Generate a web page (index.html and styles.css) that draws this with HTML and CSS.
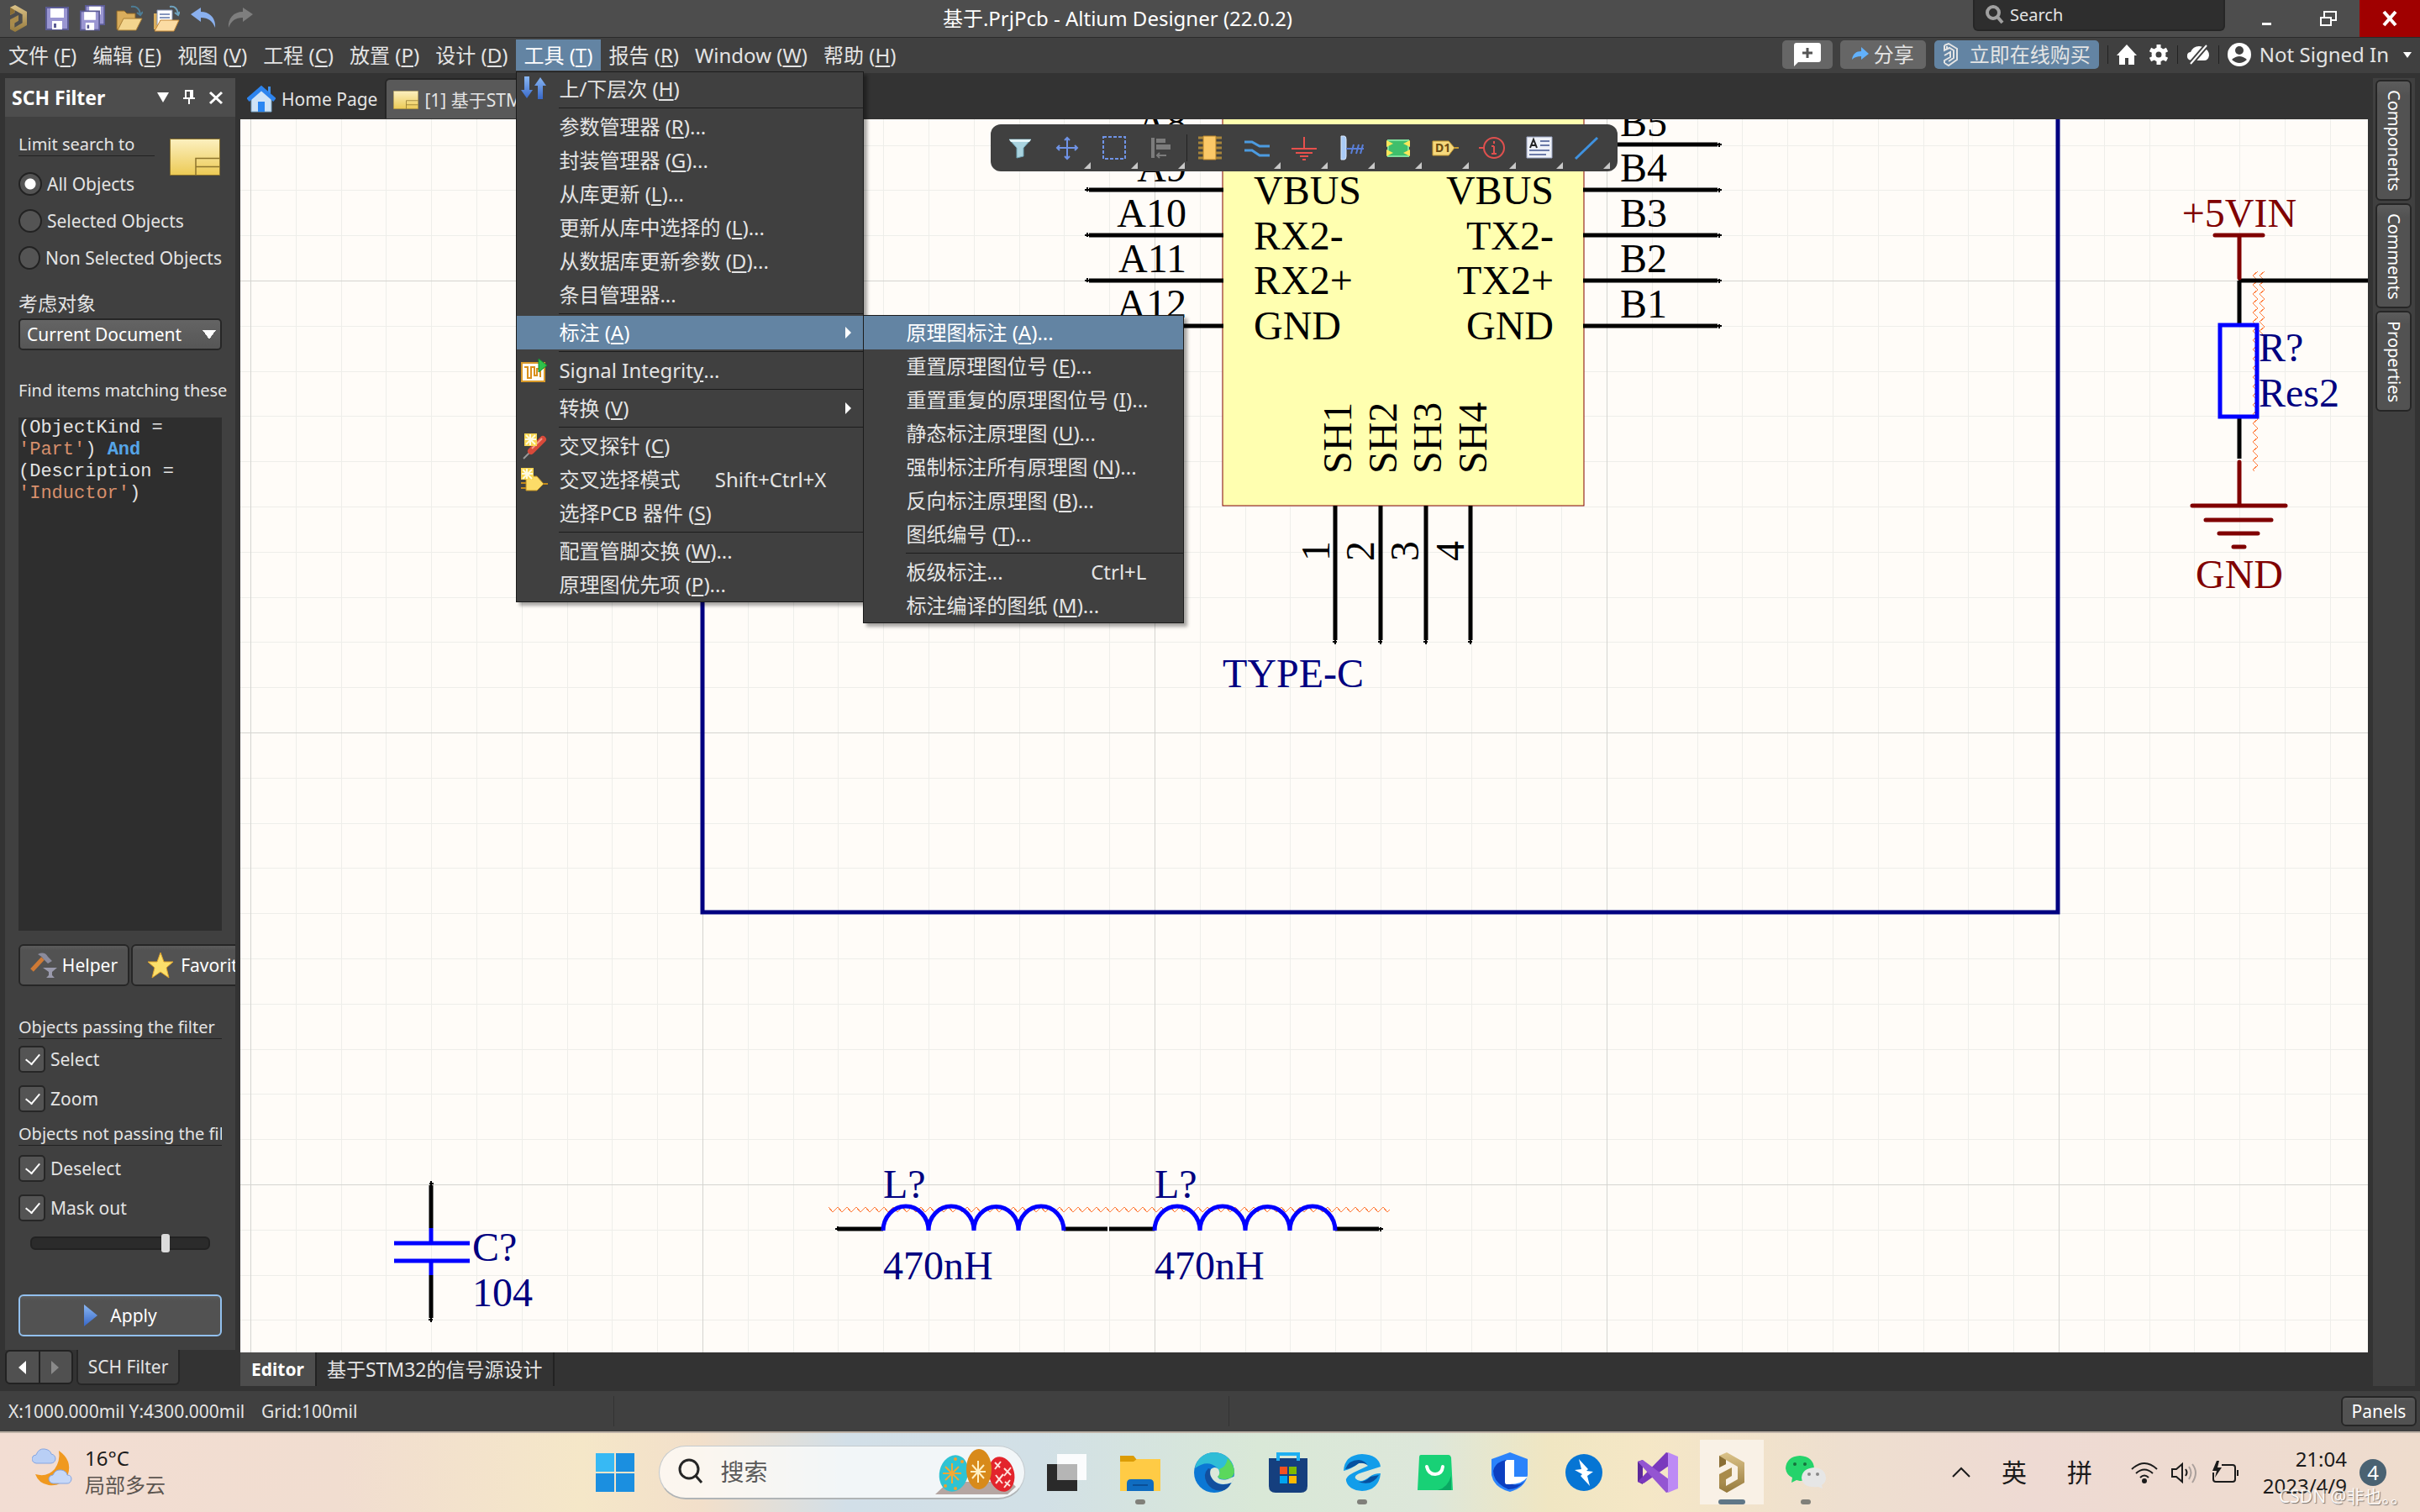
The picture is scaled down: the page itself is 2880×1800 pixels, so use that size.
FILE: index.html
```html
<!DOCTYPE html>
<html lang="zh-CN">
<head>
	<meta charset="utf-8">
	<title>基于.PrjPcb - Altium Designer (22.0.2)</title>
	<link rel="stylesheet" href="styles.css">
</head>
<body>
	<!-- shared shapes -->
	<svg class="defs" width="0" height="0" aria-hidden="true">
		<defs>
			<linearGradient id="gold" x1="0" y1="0" x2="0" y2="1"><stop offset="0" stop-color="#dcc389"/><stop offset="1" stop-color="#95793c"/></linearGradient>
			<linearGradient id="yellow" x1="0" y1="0" x2="0" y2="1"><stop offset="0" stop-color="#fcf0c0"/><stop offset="1" stop-color="#ecca55"/></linearGradient>
			<linearGradient id="blue" x1="0" y1="0" x2="0" y2="1"><stop offset="0" stop-color="#8ab8f4"/><stop offset="1" stop-color="#3767c8"/></linearGradient>
			<symbol id="altium" viewBox="0 0 48 48">
				<path fill="url(#gold)" d="M9 4L18 0L39 12V36L18 48L9 43V35L17 31V40L31 32V17L17 9V14L9 18Z"/>
				<path fill="#a98b4b" d="M9 26L24 18V28L9 37Z"/>
				<path fill="#8a6e35" d="M9 4L17 9V14L9 18Z"/>
			</symbol>
			<symbol id="sheet" viewBox="0 0 60 44" preserveAspectRatio="none">
				<path fill="url(#yellow)" stroke="#8d742c" d="M.5 .5H59.5V43.5H.5Z"/>
				<path fill="none" stroke="#8d742c" stroke-width="1.5" d="M31 43V23.500H59M31 33.500H59"/>
			</symbol>
			<symbol id="floppy" viewBox="0 0 28 28">
				<path fill="#9a96d2" stroke="#5b5b94" stroke-width="2" d="M1 1H27V27H1Z"/>
				<path fill="#fff" d="M6 2H22V13H6ZM8 17H20V27H8Z"/>
				<path fill="#5b5b94" d="M10 20H13V25H10Z"/>
			</symbol>
		</defs>
	</svg>

	<header class="titlebar">
		<div class="quick">
			<svg class="logo" width="32" height="32"><use href="#altium"/></svg>
			<button aria-label="Save"><svg width="28" height="28"><use href="#floppy"/></svg></button>
			<button aria-label="Save all"><svg width="32" height="32" viewBox="0 0 32 32"><use href="#floppy" x="7" y="0" width="24" height="24"/><use href="#floppy" x="1" y="6" width="24" height="25"/></svg></button>
			<button aria-label="Open"><svg width="32" height="32" viewBox="0 0 32 32"><path fill="#d9ad5c" stroke="#8a6526" d="M1 7H10L13 10H23V29H1Z"/><path fill="#f3d58e" stroke="#a97e35" d="M9 16H31L24 30H2Z"/><path fill="none" stroke="#4d7d96" stroke-width="2" d="M18 2C24 1 28 4 29 11M25 9L29 12L32 8"/></svg></button>
			<button aria-label="Open project"><svg width="32" height="32" viewBox="0 0 32 32"><path fill="#d9ad5c" d="M1 10H6V29H1Z"/><path fill="#fff" stroke="#8190b0" d="M5 6H23V24H5Z"/><path stroke="#8596bd" stroke-width="2" d="M8 11H20M8 15H20M8 19H20"/><path fill="#fbdca4" stroke="#c78a36" d="M9 18H31L25 31H2Z"/><path fill="none" stroke="#6fa3bf" stroke-width="2" d="M20 2C26 1 29 4 30 11M26 9L30 12L32 8"/></svg></button>
			<button aria-label="Undo"><svg width="32" height="32" viewBox="0 0 32 32"><path fill="#8ab0ee" d="M1 11L13 3V8C24 8 31 16 30 27C27 19 22 15 13 15V20Z"/></svg></button>
			<button aria-label="Redo"><svg width="32" height="32" viewBox="0 0 32 32"><path fill="#7e7e7e" d="M31 11L19 3V8C8 8 1 16 2 27C5 19 10 15 19 15V20Z"/></svg></button>
		</div>
		<h1>基于.PrjPcb - Altium Designer (22.0.2)</h1>
		<label class="search">
			<svg width="24" height="24" viewBox="0 0 24 24" fill="none" stroke="#a0a0a0" stroke-width="4"><circle cx="10" cy="9" r="7"/><path d="M15 14L21 21"/></svg>
			<input type="text" placeholder="Search" aria-label="Search">
		</label>
		<div class="window-buttons">
			<button aria-label="Minimize"><svg width="24" height="24"><path fill="#fff" d="M7 17H18V20H7Z"/></svg></button>
			<button aria-label="Restore"><svg width="24" height="24" fill="none" stroke="#fff" stroke-width="2"><path d="M3 11H15V20H3ZM7 10V4H21V14H16"/></svg></button>
			<button class="close" aria-label="Close"><svg width="24" height="24" stroke="#fff" stroke-width="4"><path d="M5 4L19 20M19 4L5 20"/></svg></button>
		</div>
	</header>

	<nav class="menubar">
		<ul class="menus">
			<li><button>文件 (<u>F</u>)</button></li>
			<li><button>编辑 (<u>E</u>)</button></li>
			<li><button>视图 (<u>V</u>)</button></li>
			<li><button>工程 (<u>C</u>)</button></li>
			<li><button>放置 (<u>P</u>)</button></li>
			<li><button>设计 (<u>D</u>)</button></li>
			<li class="open"><button>工具 (<u>T</u>)</button>
				<ul class="dropdown">
					<li><button><svg width="30" height="30" viewBox="0 0 30 30" fill="url(#blue)"><path d="M4 1H10V17H14L7 27L0 17H4ZM20 28H26V12H30L23 2L16 12H20Z"/></svg>上/下层次 (<u>H</u>)</button></li>
					<li class="line"><button>参数管理器 (<u>R</u>)...</button></li>
					<li><button>封装管理器 (<u>G</u>)...</button></li>
					<li><button>从库更新 (<u>L</u>)...</button></li>
					<li><button>更新从库中选择的 (<u>L</u>)...</button></li>
					<li><button>从数据库更新参数 (<u>D</u>)...</button></li>
					<li><button>条目管理器...</button></li>
					<li class="line open has-sub"><button>标注 (<u>A</u>)</button>
						<ul class="dropdown submenu">
							<li class="open"><button>原理图标注 (<u>A</u>)...</button></li>
							<li><button>重置原理图位号 (<u>E</u>)...</button></li>
							<li><button>重置重复的原理图位号 (<u>I</u>)...</button></li>
							<li><button>静态标注原理图 (<u>U</u>)...</button></li>
							<li><button>强制标注所有原理图 (<u>N</u>)...</button></li>
							<li><button>反向标注原理图 (<u>B</u>)...</button></li>
							<li><button>图纸编号 (<u>T</u>)...</button></li>
							<li class="line"><button>板级标注...<kbd>Ctrl+L</kbd></button></li>
							<li><button>标注编译的图纸 (<u>M</u>)...</button></li>
						</ul>
					</li>
					<li class="line"><button><svg width="32" height="32" viewBox="0 0 32 32"><path fill="#fffdf4" stroke="#d99a2b" stroke-width="2" d="M1 7H28V29H1Z"/><path fill="none" stroke="#d98f1c" stroke-width="2" d="M4 12H8V25H12V12H16V22H19V14H23V24"/><path fill="#2fc24b" stroke="#168a30" d="M21 2L31 10L21 18Z"/></svg>Signal Integrit<u>y</u>...</button></li>
					<li class="line has-sub"><button>转换 (<u>V</u>)</button></li>
					<li class="line"><button><svg width="32" height="32" viewBox="0 0 32 32"><path stroke="#999" stroke-width="2" d="M3 31L12 22"/><path stroke="#d94a3a" stroke-width="8" stroke-linecap="round" d="M12 22L26 8"/><path stroke="#f59b8b" stroke-width="2" d="M13 19L25 7"/><path fill="#f8d652" d="M4 1H19V16H4Z"/><path stroke="#fffbe0" stroke-width="2" d="M11 2V15M5 8H18M6 3L17 14M17 3L6 14"/></svg>交叉探针 (<u>C</u>)</button></li>
					<li><button><svg width="32" height="32" viewBox="0 0 32 32"><path stroke="#c48a1a" stroke-width="2" d="M0 20H8M0 26H8M25 21H32"/><path fill="#fcdc68" stroke="#b98a1e" d="M6 12H19L27 21L19 29H6Z"/><path fill="#f8d652" d="M0 2H15V16H0Z"/><path stroke="#fffbe0" stroke-width="2" d="M7 3V15M1 9H14M2 4L13 15M13 4L2 15"/></svg>交叉选择模式<kbd>Shift+Ctrl+X</kbd></button></li>
					<li><button>选择PCB 器件 (<u>S</u>)</button></li>
					<li class="line"><button>配置管脚交换 (<u>W</u>)...</button></li>
					<li><button>原理图优先项 (<u>P</u>)...</button></li>
				</ul>
			</li>
			<li><button>报告 (<u>R</u>)</button></li>
			<li><button>Window (<u>W</u>)</button></li>
			<li><button>帮助 (<u>H</u>)</button></li>
		</ul>
		<div class="account">
			<button class="pill note" aria-label="Add comment"><svg width="32" height="28" viewBox="0 0 32 28"><path fill="#fff" d="M3 0H29Q32 0 32 3V20Q32 23 29 23H5L0 28V3Q0 0 3 0Z"/><path stroke="#555" stroke-width="3" d="M16 6V18M10 12H22"/></svg></button>
			<button class="pill share"><svg width="20" height="20" viewBox="0 0 20 20"><path fill="#62b1fb" d="M0 16C1 9 5 6 11 6V1L20 9L11 16V12C6 12 3 13 0 16Z"/></svg>分享</button>
			<button class="pill buy"><svg width="20" height="28" viewBox="0 0 20 28" fill="none" stroke="#e4e4e4" stroke-width="2"><path d="M2 3L7 1L17 7V20L7 27L2 24M2 3V9L8 6L13 9V18L7 22M2 15L9 11V17L2 21V24M5 4V8"/></svg>立即在线购买</button>
			<i class="bar"></i>
			<button aria-label="Home"><svg width="24" height="24" viewBox="0 0 24 24"><path fill="#fff" d="M12 0L24 13H21V24H14V16H10V24H3V13H0Z"/></svg></button>
			<button aria-label="Settings"><svg width="24" height="24" viewBox="0 0 24 24"><circle cx="12" cy="12" r="6" fill="none" stroke="#fff" stroke-width="5"/><path stroke="#fff" stroke-width="5" d="M12 0V5M12 19V24M2 6L6 8M18 16L22 18M2 18L6 16M18 8L22 6"/></svg></button>
			<i class="bar"></i>
			<button aria-label="Offline"><svg width="28" height="24" viewBox="0 0 28 24"><path fill="#fff" d="M6 19Q0 18 1 12Q2 9 5 9Q8 2 15 2Q19 2 20 4Q27 6 27 13Q26 19 21 19Z"/><path stroke="#404040" stroke-width="6" d="M5 23L24 1"/><path stroke="#fff" stroke-width="2" d="M5 23L24 1"/></svg></button>
			<i class="bar"></i>
			<button class="user"><svg width="28" height="28" viewBox="0 0 28 28"><circle cx="14" cy="14" r="14" fill="#fff"/><circle cx="14" cy="9" r="5" fill="#404040"/><path fill="#404040" d="M5 20Q14 12 23 20Q14 28 5 20Z"/></svg>Not Signed In <span class="caret"></span></button>
		</div>
	</nav>

	<div class="workspace">
		<aside class="left">
			<section class="panel">
				<header>
					<h2>SCH Filter</h2>
					<button aria-label="Menu"><svg width="16" height="24"><path fill="#fff" d="M1 6H15L8 18Z"/></svg></button>
					<button aria-label="Pin"><svg width="14" height="24" fill="none" stroke="#fff" stroke-width="2"><path d="M3 12V4H11V12M0 13H14M9 4V12M7 13V20"/></svg></button>
					<button aria-label="Close"><svg width="18" height="24" stroke="#fff" stroke-width="3"><path d="M2 6L16 19M16 6L2 19"/></svg></button>
				</header>
				<div class="panel-body">
					<div class="limit">
						<p class="legend">Limit search to</p>
						<svg width="60" height="44"><use href="#sheet"/></svg>
					</div>
					<label class="radio"><input type="radio" name="limit" checked>All Objects</label>
					<label class="radio"><input type="radio" name="limit">Selected Objects</label>
					<label class="radio"><input type="radio" name="limit">Non Selected Objects</label>
					<label class="consider" for="scope">考虑对象</label>
					<select id="scope"><option>Current Document</option><option>Open Documents</option></select>
					<p class="find" id="query-label">Find items matching these</p>
					<div class="query" contenteditable="true" spellcheck="false" role="textbox" aria-labelledby="query-label">(ObjectKind = <em>'Part'</em>) <b>And</b> (Description = <em>'Inductor'</em>)</div>
					<div class="helpers">
						<button><svg width="32" height="34" viewBox="0 0 32 34"><path stroke="#cf7a35" stroke-width="5" d="M2 23L15 9"/><path fill="#8b8b9c" d="M9 4Q17 0 21 7L26 12L21 15L16 10Q13 6 9 4Z"/><path fill="#9a9aac" d="M15 20H32L26 25V29L29 32H19L22 29V25Z"/></svg>Helper</button>
						<button class="fav"><svg width="32" height="32" viewBox="0 0 32 32"><path fill="#fbdf6b" stroke="#e0a52c" d="M16 1L20 12L31 12L23 19L26 31L16 24L6 31L9 19L1 12L12 12Z"/></svg>Favorites</button>
					</div>
					<p class="legend passing">Objects passing the filter</p>
					<label class="check"><input type="checkbox" checked>Select</label>
					<label class="check"><input type="checkbox" checked>Zoom</label>
					<p class="legend not-passing">Objects not passing the filter</p>
					<label class="check"><input type="checkbox" checked>Deselect</label>
					<label class="check"><input type="checkbox" checked>Mask out</label>
					<input class="level" type="range" min="0" max="100" value="77" aria-label="Mask level">
					<button class="apply"><svg width="18" height="28"><path fill="url(#blue)" d="M1 1L17 14L1 27Z"/></svg>Apply</button>
				</div>
			</section>
			<div class="panel-tabs">
				<div class="arrows"><button aria-label="Previous"><svg width="10" height="16"><path fill="#fff" d="M9 0V16L0 8Z"/></svg></button><button aria-label="Next"><svg width="10" height="16"><path fill="#8a8a8a" d="M0 0V16L9 8Z"/></svg></button></div>
				<button class="tab">SCH Filter</button>
			</div>
		</aside>

		<main class="center">
			<div class="doc-tabs">
				<a href="#home" class="doc"><svg width="34" height="34" viewBox="0 0 34 34"><path fill="#cfe3f6" stroke="#7aa6c8" d="M5 15L17 4L29 15V32H5Z"/><path fill="#3f8fe8" d="M25 2H28V10H25Z"/><path fill="none" stroke="#2d84ee" stroke-width="5" d="M1 18L17 4L33 18"/><path fill="#2a86f2" d="M13 20H21V32H13Z"/></svg>Home Page</a>
				<a href="#sheet1" class="doc active"><svg width="30" height="22"><use href="#sheet"/></svg>[1] 基于STM32的信号源设计.SchDoc</a>
			</div>

			<div class="sheet">
				<svg class="schematic" width="100%" height="100%">
					<defs>
						<pattern id="grid" x="298" y="334" width="538" height="538" patternUnits="userSpaceOnUse">
							<path class="minor" d="M54 0V538M108 0V538M161 0V538M215 0V538M269 0V538M323 0V538M377 0V538M430 0V538M484 0V538M0 54H538M0 108H538M0 161H538M0 215H538M0 269H538M0 323H538M0 377H538M0 430H538M0 484H538"/>
							<path class="major" d="M0 0V538M0 0H538"/>
						</pattern>
						<pattern id="wave-h" x="986" y="1436" width="11" height="8" patternUnits="userSpaceOnUse"><path class="wave" d="M0 1L5 7L11 1"/></pattern>
						<pattern id="wave-v" x="2680" y="323" width="8" height="11" patternUnits="userSpaceOnUse"><path class="wave" d="M7 0L1 5L7 11"/></pattern>
						<g id="coil">
							<path stroke="#000" d="M-54 0H0M215 0H267"/>
							<path stroke="#00f" d="M0 2A26 28 0 0 1 54 2A26 28 0 0 1 108 2A26 28 0 0 1 161 2A26 28 0 0 1 215 2"/>
						</g>
						<!-- free end of a pin -->
						<marker id="tip" viewBox="0 0 6 7" refX="3" refY="3" markerWidth="6" markerHeight="7" markerUnits="userSpaceOnUse" orient="auto-start-reverse"><path stroke="#000" stroke-width="2" d="M0 3H6M3 1V6"/></marker>
					</defs>
					<!-- drawing uses window coordinates, the sheet starts at 286,142 -->
					<g transform="translate(-286 -142)">
						<rect x="286" y="142" width="100%" height="100%" fill="url(#grid)"/>
						<path class="wire navy" d="M836 142V1086H2449V142"/>

						<rect class="part" x="1455" y="130" width="430" height="472"/>
						<path class="wire" d="M1296 172H1456M1296 226H1456M1296 280H1456M1296 334H1456M1296 388H1456M1884 172H2044M1884 226H2044M1884 280H2044M1884 334H2044M1884 388H2044M1589 602V762M1643 602V762M1697 602V762M1750 602V762"/>
						<g class="tips">
							<path d="M1294 226H1300"/><path d="M1294 280H1300"/><path d="M1294 334H1300"/>
							<path d="M2046 172H2040"/><path d="M2046 226H2040"/><path d="M2046 280H2040"/><path d="M2046 334H2040"/><path d="M2046 388H2040"/>
							<path d="M1589 764V758"/><path d="M1643 764V758"/><path d="M1697 764V758"/><path d="M1750 764V758"/>
							<path d="M513 1409V1415"/><path d="M513 1571V1565"/>
							<path d="M997 1463H1003"/><path d="M1643 1463H1637"/>
						</g>
						<g text-anchor="end">
							<text x="1412" y="162">A8</text>
							<text x="1412" y="216">A9</text>
							<text x="1412" y="270">A10</text>
							<text x="1412" y="324">A11</text>
							<text x="1412" y="378">A12</text>
							<text x="1849" y="243">VBUS</text>
							<text x="1849" y="297">TX2-</text>
							<text x="1849" y="350">TX2+</text>
							<text x="1849" y="404">GND</text>
						</g>
						<g>
							<text x="1492" y="243">VBUS</text>
							<text x="1492" y="297">RX2-</text>
							<text x="1492" y="350">RX2+</text>
							<text x="1492" y="404">GND</text>
							<text x="1928" y="162">B5</text>
							<text x="1928" y="216">B4</text>
							<text x="1928" y="270">B3</text>
							<text x="1928" y="324">B2</text>
							<text x="1928" y="378">B1</text>
						</g>
						<g>
							<text transform="translate(1608 564) rotate(-90)">SH1</text>
							<text transform="translate(1662 564) rotate(-90)">SH2</text>
							<text transform="translate(1715 564) rotate(-90)">SH3</text>
							<text transform="translate(1769 564) rotate(-90)">SH4</text>
							<text transform="translate(1582 668) rotate(-90)">1</text>
							<text transform="translate(1635 668) rotate(-90)">2</text>
							<text transform="translate(1688 668) rotate(-90)">3</text>
							<text transform="translate(1742 668) rotate(-90)">4</text>
						</g>
						<text class="name" x="1455" y="818">TYPE-C</text>

						<!-- +5VIN divider -->
						<rect x="2680" y="323" width="8" height="238" fill="url(#wave-v)"/>
						<rect x="2688" y="323" width="8" height="76" fill="url(#wave-v)"/>
						<path class="wire" d="M2664 334H2900M2665 334V386M2665 498V546"/>
						<path class="wire maroon" d="M2636 280H2693M2665 280V331M2665 550V602M2609 602H2720M2625 619H2703M2641 635H2687M2658 651H2671"/>
						<rect class="outline" x="2642" y="387" width="44" height="109"/>
						<text class="power" x="2665" y="270" text-anchor="middle">+5VIN</text>
						<text class="power" x="2665" y="700" text-anchor="middle">GND</text>
						<text class="name" x="2688" y="430">R?</text>
						<text class="name" x="2688" y="484">Res2</text>

						<!-- capacitor -->
						<path class="wire" d="M513 1411V1462M513 1518V1569"/>
						<path class="wire blue" d="M513 1462V1480M469 1480H559M469 1501H559M513 1501V1518"/>
						<text class="name" x="562" y="1501">C?</text>
						<text class="name" x="562" y="1555">104</text>

						<!-- inductors -->
						<rect x="986" y="1436" width="668" height="8" fill="url(#wave-h)"/>
						<g class="wire"><use href="#coil" x="1051" y="1463"/><use href="#coil" x="1374" y="1463"/></g>
						<text class="name" x="1051" y="1426">L?</text>
						<text class="name" x="1051" y="1523">470nH</text>
						<text class="name" x="1374" y="1426">L?</text>
						<text class="name" x="1374" y="1523">470nH</text>
					</g>
				</svg>

				<div class="active-bar">
					<button aria-label="Filter"><svg width="32" height="36" viewBox="0 0 32 36"><path fill="#a9d3df" stroke="#6fa4b5" d="M3 8H29L20 18V28L12 30V18Z"/><path fill="#e4f5fa" d="M3 8H29L27 11H5Z"/></svg></button>
					<button aria-label="Move"><svg width="32" height="36" viewBox="0 0 32 36" stroke="#6f93e6" stroke-width="2" fill="none"><path d="M16 6V31M4 18H28M13 9L16 6L19 9M13 28L16 31L19 28M7 15L4 18L7 21M25 15L28 18L25 21"/></svg></button>
					<button aria-label="Select"><svg width="32" height="36" viewBox="0 0 32 36"><path fill="none" stroke="#6f93e6" stroke-width="2" stroke-dasharray="4 2" d="M3 5H29V31H3Z"/></svg></button>
					<button aria-label="Align"><svg width="32" height="36" viewBox="0 0 32 36"><path fill="#7c7c7c" d="M4 6H8V30H4ZM10 7H21V12H10ZM10 14H27V20H10Z"/><path stroke="#7c7c7c" stroke-width="2" d="M11 27H22M14 24L11 27L14 30"/></svg></button>
					<button class="split" aria-label="Place part"><svg width="32" height="36" viewBox="0 0 32 36"><path stroke="#a8853a" stroke-width="3" d="M2 6H30M2 12H30M2 18H30M2 24H30M2 30H30"/><path fill="#fbc867" stroke="#b8842b" d="M8 4H23V32H8Z"/></svg></button>
					<button aria-label="Wire"><svg width="32" height="36" viewBox="0 0 32 36" fill="none" stroke="#4c9be0" stroke-width="3"><path d="M1 11H10L19 16H31M1 21H10L19 27H31"/></svg></button>
					<button aria-label="Power port"><svg width="32" height="36" viewBox="0 0 32 36" stroke="#e8504c" stroke-width="2"><path d="M16 5V19M1 19H31M6 24H26M11 28H21M14 32H18"/></svg></button>
					<button aria-label="Bus"><svg width="32" height="36" viewBox="0 0 32 36"><path fill="#a9cbf6" stroke="#dceafc" d="M4 4H8Q10 4 10 8V28Q10 32 8 32H4Z"/><path stroke="#5a7fd8" stroke-width="2" d="M10 19H31M16 25L19 14M22 25L25 14M27 25L30 14"/></svg></button>
					<button aria-label="Sheet symbol"><svg width="32" height="36" viewBox="0 0 32 36"><path fill="#3fbf6c" stroke="#7de09c" stroke-width="2" d="M4 9H28V28H4Z"/><path fill="#fbe75a" d="M2 9L10 13L2 17ZM30 9L22 13L30 17ZM2 20L10 24L2 28ZM30 20L22 24L30 28Z"/></svg></button>
					<button aria-label="Port"><svg width="32" height="36" viewBox="0 0 32 36"><path fill="#f5d87c" stroke="#c59a32" d="M1 10H20L27 18L20 27H1Z"/><path stroke="#c59a32" stroke-width="2" d="M27 18H32"/><text class="port-text" x="4" y="23">D1</text></svg></button>
					<button aria-label="Directive"><svg width="32" height="36" viewBox="0 0 32 36" fill="none" stroke="#e0504e" stroke-width="2"><circle cx="18" cy="18" r="12"/><path d="M0 18H6M18 16V25M15 25H21M18 10V13M15 16H18"/></svg></button>
					<button aria-label="Text"><svg width="32" height="36" viewBox="0 0 32 36"><path fill="#eef1f8" stroke="#9aa5c4" d="M1 5H31V30H1Z"/><path stroke="#6b7aa8" stroke-width="2" d="M17 10H28M17 15H28M4 21H28M4 26H24"/><path fill="none" stroke="#222" stroke-width="2" d="M5 18L9 8L13 18M6 15H12"/></svg></button>
					<button aria-label="Line"><svg width="32" height="36" viewBox="0 0 32 36"><path stroke="#3f92e0" stroke-width="3" d="M3 31L29 6"/></svg></button>
				</div>
			</div>

			<div class="editor-tabs">
				<button class="active">Editor</button>
				<button>基于STM32的信号源设计</button>
			</div>
		</main>

		<aside class="right">
			<button>Components</button>
			<button>Comments</button>
			<button>Properties</button>
		</aside>
	</div>

	<footer class="status">
		<span class="coords">X:1000.000mil Y:4300.000mil</span>
		<span class="cell">Grid:100mil</span>
		<span class="cell"></span>
		<button>Panels</button>
	</footer>

	<div class="taskbar">
		<div class="weather">
			<svg width="48" height="48" viewBox="0 0 48 48"><path fill="#f0991f" d="M32 3Q48 14 43 31Q36 46 20 44Q8 42 4 31Q18 35 27 25Q34 15 32 3Z"/><path fill="#b9cff5" stroke="#86a6e2" d="M5 18Q0 17 0 12Q1 8 5 8Q8 0 15 1Q22 2 23 7Q28 8 28 13Q27 18 22 18Z"/><path fill="#c6d8f8" stroke="#86a6e2" d="M25 42Q20 41 20 36Q21 32 25 32Q28 25 35 26Q41 27 42 32Q47 32 47 37Q46 42 42 42Z"/></svg>
			<p>16°C<br><span>局部多云</span></p>
		</div>
		<div class="apps">
			<button aria-label="Start"><svg width="48" height="48"><path fill="#1b8fe0" d="M1 1H23V23H1ZM25 1H47V23H25ZM1 25H23V47H1ZM25 25H47V47H25Z"/><path fill="#37b9f4" d="M1 1H23V23H1Z"/></svg></button>
			<label class="find-box">
				<svg width="32" height="32" viewBox="0 0 32 32" fill="none" stroke="#262626" stroke-width="3"><circle cx="14" cy="13" r="11"/><path d="M22 21L29 29"/></svg>
				<input type="text" placeholder="搜索" aria-label="搜索">
				<svg width="100" height="56" viewBox="0 0 100 56"><path fill="#b5a6a2" d="M2 55L18 40H92L98 46L88 55Z"/><ellipse cx="24" cy="30" rx="17" ry="22" fill="#2fc3d3" transform="rotate(14 24 30)"/><ellipse cx="81" cy="31" rx="15" ry="21" fill="#e3242c" transform="rotate(-14 81 31)"/><ellipse cx="54" cy="25" rx="15" ry="24" fill="#d88a1a"/><g fill="none" stroke-width="2"><path stroke="#f5a833" d="M22 18V42M11 30H33M14 22L30 38M30 22L14 38"/><path stroke="#fff0c4" d="M53 15V41M44 28H62M46 20L60 36M60 20L46 36"/><path stroke="#ffe3dd" d="M73 17L79 23M80 16L73 25M84 24L92 32M92 23L84 33M74 32L82 42M83 31L74 42M85 40L91 45M91 38L84 47"/></g><g fill="#f0a030"><circle cx="26" cy="13" r="2"/><circle cx="34" cy="16" r="2"/><circle cx="14" cy="45" r="2"/><circle cx="26" cy="48" r="2"/></g></svg>
			</label>
			<button aria-label="Task view"><svg width="48" height="48"><path fill="#2a2a2a" d="M1 14H37V46H1Z"/><path fill="#fff" fill-opacity=".9" d="M13 2H48V33H13Z"/><path fill="#b5b5b5" d="M13 14H37V33H13Z"/></svg></button>
			<button class="running" aria-label="Explorer"><svg width="48" height="48"><path fill="#dc9c05" d="M0 4H16L20 9H46V16H0Z"/><path fill="#ffcb45" d="M0 11H16L20 8H48V46H0Z"/><path fill="#0f6cc0" d="M8 46V37Q8 32 13 32H35Q40 32 40 37V46Z"/><path stroke="#0a4f96" stroke-width="2" d="M15 39H33"/></svg></button>
			<button aria-label="Edge"><svg width="48" height="48"><circle cx="24" cy="24" r="24" fill="#0b77d4"/><path fill="#2fbdd6" d="M1 19Q5 1 24 0Q40 1 46 14Q50 26 42 30Q33 34 28 30Q32 24 27 18Q16 8 1 19Z"/><path fill="#5bd85c" d="M40 7Q48 15 48 24Q46 32 37 32Q30 32 28 29Q32 25 30 20Q38 18 40 7Z"/><path fill="#124f9e" d="M17 19Q10 26 15 36Q22 48 36 45Q42 42 44 36Q30 42 23 33Q18 27 20 20Z"/><path fill="#dbe8da" d="M29 20Q32 26 28 29Q30 34 40 32L49 28L45 36Q32 41 24 34Q17 27 20 20Q25 16 29 20Z"/></svg></button>
			<button aria-label="Store"><svg width="48" height="48"><path fill="#153f7e" d="M1 7H47V40Q47 48 39 48H9Q1 48 1 40Z"/><path fill="none" stroke="#1fb0f2" stroke-width="4" d="M12 10V2H36V10"/><path fill="#f25022" d="M14 17H23V26H14Z"/><path fill="#7fba00" d="M25 17H34V26H25Z"/><path fill="#00a4ef" d="M14 28H23V37H14Z"/><path fill="#ffb900" d="M25 28H34V37H25Z"/></svg></button>
			<button class="running" aria-label="Browser"><svg width="48" height="48"><path fill="#129dea" d="M2 22Q3 3 24 2Q44 3 46 17L24 24Q14 27 16 31Q22 38 33 29Q38 25 46 25Q44 45 24 46Q8 45 5 34Q4 29 14 24L31 16Q28 11 20 13Q11 20 2 22Z"/><path fill="#07509f" d="M4 20Q8 9 20 9Q28 10 31 16Q27 12 20 13Q12 19 4 20ZM19 35Q27 36 34 29L44 27Q36 41 19 35Z"/></svg></button>
			<button aria-label="Shop"><svg width="48" height="48"><path fill="#18d176" d="M6 3H39Q41 3 42 6L44 45H2L4 6Q4 3 6 3Z"/><path fill="#0aa763" d="M42 28V45H26Q38 42 42 28Z"/><path fill="none" stroke="#fff" stroke-width="4" stroke-linecap="round" d="M13 17Q15 26 23 26Q31 26 32 17"/></svg></button>
			<button aria-label="Lenovo"><svg width="48" height="48"><path fill="#2b83fb" d="M2 8L24 0L45 8V27Q42 42 24 47Q5 42 2 27Z"/><path fill="#0c3fc0" d="M19 9H27V38Q36 40 42 34Q34 44 22 44Q4 36 4 22Q6 12 19 9Z"/><path fill="#fff" d="M20 9H29V29H45Q38 39 20 38Q18 38 18 35V11Z"/></svg></button>
			<button aria-label="Thunder"><svg width="48" height="48"><circle cx="24" cy="24" r="22" fill="#0675d4"/><path fill="#fff" d="M18 8L29 20L27 22L35 23L28 28L31 40L20 28L22 26L13 21L21 20Z"/></svg></button>
			<button aria-label="Visual Studio"><svg width="48" height="48"><path fill="#5c2899" d="M0 11L6 9V38L0 35Z"/><path fill="#7a39bd" d="M0 35L34 0L37 1V16L7 37Z"/><path fill="#9455d2" d="M0 11L6 9L37 32V47L34 48Z"/><path fill="#bd8af5" d="M36 0L48 5V43L36 48Z"/></svg></button>
			<button class="running current" aria-label="Altium Designer"><svg width="48" height="48"><use href="#altium"/></svg></button>
			<button class="running" aria-label="WeChat"><svg width="48" height="48"><path fill="#25d36b" d="M17 4Q33 5 34 19Q33 34 17 34L13 33L7 36L8 30Q1 27 0 19Q1 5 17 4Z"/><circle cx="11" cy="14" r="2" fill="#16733d"/><circle cx="23" cy="14" r="2" fill="#16733d"/><path fill="#e6e6e6" d="M34 18Q47 19 48 30Q48 36 43 39L44 43L39 41Q20 43 19 30Q20 19 34 18Z"/><circle cx="28" cy="26" r="2" fill="#888"/><circle cx="38" cy="26" r="2" fill="#888"/></svg></button>
		</div>
		<div class="tray">
			<button aria-label="More"><svg width="24" height="24" fill="none" stroke="#1b1b1b" stroke-width="2"><path d="M2 17L12 7L22 17"/></svg></button>
			<button>英</button>
			<button>拼</button>
			<button class="system" aria-label="Network, volume, battery">
				<svg width="32" height="28" fill="none" stroke="#1b1b1b" stroke-width="2"><path d="M1 10Q16 -4 31 10M6 15Q16 6 26 15M11 20Q16 15 21 20"/><circle cx="16" cy="24" r="2" fill="#1b1b1b"/></svg>
				<svg width="32" height="28" fill="none" stroke="#1b1b1b" stroke-width="2"><path d="M1 10H6L13 4V25L6 19H1ZM17 10Q20 14 17 18"/><path stroke="#aaa09c" d="M21 7Q26 14 21 22M25 4Q33 14 25 26"/></svg>
				<svg width="34" height="28" fill="none" stroke="#1b1b1b" stroke-width="2"><path d="M12 5H25Q28 5 28 8V22Q28 25 25 25H5Q2 25 2 22V14M31 11V18"/><path fill="#1b1b1b" stroke="none" d="M6 0L1 12H6L4 20L12 8H7L9 0Z"/></svg>
			</button>
			<p class="clock">21:04<br>2023/4/9</p>
			<span class="badge">4</span>
			<span class="watermark">CSDN @非也。。</span>
		</div>
	</div>
</body>
</html>
```
FILE: styles.css
```css
* { box-sizing: border-box; }
body { margin: 0; min-height: 100vh; display: flex; flex-direction: column; background: #333333; color: #e4e4e4; font-family: "Noto Sans", "Noto Sans CJK SC", sans-serif; font-size: 21px; line-height: 28px; overflow: hidden; }
h1, h2, p, ul { margin: 0; padding: 0; font-weight: normal; }
ul { list-style: none; }
button { display: flex; align-items: center; justify-content: center; margin: 0; padding: 0; border: 0; background: none; color: inherit; font: inherit; white-space: nowrap; }
input, select { margin: 0; font: inherit; color: inherit; }
a { color: inherit; text-decoration: none; }
svg { flex: none; }
.defs { position: absolute; }

/* title bar */
.titlebar { display: flex; align-items: center; height: 45px; background: #4d4d4d; border-bottom: 1px solid #2b2b2b; }
.quick { display: flex; align-items: center; gap: 12px; width: 312px; padding-left: 6px; }
.quick .logo { margin-right: 4px; }
.titlebar h1 { flex: 1; text-align: center; font-size: 24px; color: #ffffff; }
.search { display: flex; align-items: center; align-self: flex-start; gap: 4px; width: 300px; height: 37px; padding-left: 12px; background: #2e2e2e; border: 2px solid #262626; border-top: 0; border-radius: 0 0 6px 6px; }
.search input { width: 200px; border: 0; background: none; outline: none; font-size: 20px; }
.search input::placeholder { color: #e4e4e4; }
.window-buttons { display: flex; height: 44px; padding-left: 12px; }
.window-buttons button { width: 74px; }
.window-buttons .close { width: 72px; background: #a00000; }

/* menu bar */
.menubar { display: flex; justify-content: space-between; height: 42px; padding: 2px 10px 0 1px; background: #404040; font-size: 24px; }
.menus { display: flex; }
.menus > li { position: relative; height: 37px; }
.menus > li > button { height: 37px; padding: 0 10px 0 9px; }
.menus u { text-underline-offset: 3px; text-decoration-thickness: 2px; }
.open > button { background: #6384a3; color: #ffffff; }

.dropdown { position: absolute; z-index: 10; top: 38px; left: 0; width: 414px; background: #404040; border: 1px solid #1c1c1c; box-shadow: 4px 4px 4px rgba(0, 0, 0, 0.35); }
.dropdown > li { position: relative; }
.dropdown > li > button { position: relative; width: 100%; height: 40px; padding: 0 44px 0 50px; justify-content: flex-start; }
.dropdown > li > button > svg { position: absolute; left: 5px; top: 4px; }
.dropdown > .line { padding-top: 5px; }
.dropdown > .line::before { content: ""; position: absolute; left: 50px; right: 0; top: 2px; height: 1px; background: #1c1c1c; }
.has-sub > button::after { content: ""; position: absolute; right: 14px; top: 13px; border: 7px solid transparent; border-left-color: #ffffff; border-right: 0; }
.dropdown .submenu { top: 4px; left: 100%; width: 382px; }
.dropdown kbd { margin-left: auto; font: inherit; }

.account { display: flex; align-items: center; gap: 14px; padding-bottom: 4px; }
.pill { height: 34px; border-radius: 5px; background: #666666; }
.note { width: 60px; }
.share { width: 102px; gap: 6px; margin-left: -5px; }
.buy { width: 196px; gap: 12px; margin-left: -4px; background: #6384a3; }
.bar { width: 1px; height: 22px; background: #222222; margin: 0 -4px; }
.user { gap: 10px; }
.caret { border: 5px solid transparent; border-top: 7px solid #ffffff; border-bottom: 0; margin-left: 7px; }

/* workspace */
.workspace { flex: 1; display: flex; min-height: 0; padding: 6px; }
.left { display: flex; flex-direction: column; width: 274px; flex: none; }
.panel { flex: 1; display: flex; flex-direction: column; background: #404040; overflow: hidden; }
.panel > header { display: flex; align-items: center; gap: 16px; height: 46px; padding: 0 14px 0 8px; background: #4d4d4d; color: #ffffff; }
.panel h2 { flex: 1; font-size: 23px; font-weight: bold; }
.panel-body { flex: 1; display: flex; flex-direction: column; padding: 20px 16px 16px; white-space: nowrap; }
.legend { border-bottom: 1px solid #222222; font-size: 20px; line-height: 26px; overflow: hidden; }
.limit { display: flex; justify-content: space-between; align-items: flex-start; height: 38px; padding-right: 2px; }
.limit .legend { width: 162px; }
.limit svg { margin-top: 6px; }
.radio { display: flex; align-items: center; gap: 6px; height: 44px; }
.radio input { appearance: none; width: 28px; height: 28px; border: 2px solid #222222; border-radius: 50%; background: #545454; }
.radio input:checked { background: radial-gradient(circle, #ffffff 6px, #545454 7px); }
.consider { margin-top: 18px; height: 32px; font-size: 23px; }
select { appearance: none; height: 38px; padding: 0 8px; border: 2px solid #262626; border-radius: 5px; background: linear-gradient(to top right, transparent 50%, #ffffff 51%) right 13px center / 8px 11px no-repeat, linear-gradient(to top left, transparent 50%, #ffffff 51%) right 5px center / 8px 11px no-repeat, linear-gradient(#646464, #565656); color: #ffffff; }
.find { margin-top: 34px; margin-bottom: 18px; margin-right: -16px; font-size: 20px; }
.query { flex: 1; min-height: 100px; background: #2e2e2e; font: 22px/26px "Liberation Mono", monospace; white-space: pre-wrap; outline: none; }
.query em { font-style: normal; color: #d8906c; }
.query b { color: #55a5e8; }
.helpers { display: flex; gap: 2px; margin: 16px -16px 32px 0; overflow: hidden; }
.helpers button, .apply, .right button, .status button { height: 50px; border: 2px solid #262626; border-radius: 6px; background: linear-gradient(#5c5c5c, #525252 12%); color: #ffffff; }
.helpers button { flex: none; width: 132px; gap: 6px; }
.helpers .fav { width: 168px; gap: 8px; }
.check { display: flex; align-items: center; gap: 6px; height: 46px; margin-top: 1px; }
.check input { appearance: none; width: 32px; height: 32px; border: 2px solid #262626; border-radius: 5px; background: #545454; }
.check input:checked::before { content: ""; display: block; width: 8px; height: 14px; margin: 4px 0 0 10px; border: solid #ffffff; border-width: 0 2px 2px 0; transform: rotate(40deg); }
.passing { margin-top: 4px; }
.not-passing { margin: 6px 0 3px; }
.level { appearance: none; height: 16px; margin: 11px 14px 53px; border: 2px solid #222222; border-radius: 6px; background: #2b2b2b; }
.level::-webkit-slider-thumb { appearance: none; width: 10px; height: 22px; border-radius: 3px; background: #dcdcdc; }
.apply { gap: 14px; border-color: #92c0ee; }

.panel-tabs { display: flex; gap: 4px; height: 43px; }
.arrows { display: flex; width: 81px; height: 41px; border: 2px solid #222222; border-radius: 6px; background: #505050; }
.arrows button { flex: 1; }
.arrows button + button { border-left: 2px solid #222222; }
.panel-tabs .tab { width: 123px; height: 42px; border: 2px solid #262626; border-top: 0; border-radius: 0 0 6px 6px; background: #404040; }

.center { flex: 1; display: flex; flex-direction: column; min-width: 0; margin: 0 6px; }
.doc-tabs { display: flex; height: 49px; padding-bottom: 1px; }
.doc { display: flex; align-items: center; gap: 7px; padding: 2px 9px 0 8px; white-space: nowrap; }
.doc.active { border: 2px solid #262626; border-bottom: 0; border-radius: 6px 6px 0 0; background: #595959; }
.sheet { position: relative; flex: 1; min-height: 0; background: #fffcf8; }
.schematic { position: absolute; inset: 0; font-family: "Liberation Serif", serif; font-size: 48px; }
.minor { stroke: #eeeeea; stroke-width: 1; shape-rendering: crispEdges; }
.major { stroke: #d4d4d0; stroke-width: 2; shape-rendering: crispEdges; }
.wave { fill: none; stroke: #ff8040; stroke-width: 1; shape-rendering: crispEdges; }
.wire { fill: none; stroke: #000000; stroke-width: 5; }
.tips path { marker-start: url(#tip); }
.navy { stroke: #000080; }
.maroon { stroke: #800000; stroke-linecap: round; }
.blue { stroke: #0000ff; }
.part { fill: #ffffb0; stroke: #800000; }
.outline { fill: none; stroke: #0000ff; stroke-width: 5; }
.name { fill: #000080; }
.power { fill: #800000; }

.active-bar { position: absolute; top: 6px; left: 893px; display: flex; padding: 0 9px 0 7px; height: 56px; border-radius: 12px; background: #404040; }
.active-bar button { position: relative; width: 56px; }
.active-bar button:not(:first-child):not(.split)::after { content: ""; position: absolute; right: 0; bottom: 3px; border-left: 8px solid transparent; border-bottom: 8px solid #c8c8c8; }
.active-bar .split { margin-left: 2px; }
.split::before { content: ""; position: absolute; left: 0; top: 12px; height: 32px; width: 1px; background: #222222; }
.port-text { font: bold 14px "Noto Sans", sans-serif; fill: #6b4b12; }

.editor-tabs { display: flex; height: 40px; }
.editor-tabs button { padding: 0 12px; border-right: 2px solid #222222; font-size: 23px; }
.editor-tabs .active { padding: 0 13px; background: #4d4d4d; color: #ffffff; font-weight: bold; font-size: 21px; }

.right { width: 50px; flex: none; padding: 2px 4px 0 3px; background: #404040; }
.right button { width: 43px; height: auto; margin-bottom: 3px; padding: 10px 0 9px; writing-mode: vertical-rl; font-size: 20px; }

/* status bar */
.status { display: grid; grid-template-columns: 301px 430px 732px 1fr; align-items: center; height: 50px; background: #404040; border-bottom: 2px solid #bcb1a6; }
.coords { padding-left: 10px; }
.cell { height: 36px; line-height: 36px; padding-left: 10px; border-right: 1px solid #333333; }
.status button { justify-self: end; width: 90px; height: 36px; margin-right: 4px; }

/* windows taskbar */
.taskbar { display: grid; grid-template-columns: 1fr auto 1fr; height: 94px; background: linear-gradient(90deg, #f2ddd3, #f1ddd0 14%, #f5e7c8 24%, #f2dfca 29%, #d2dfe8 35%, #d2e0e6 43%, #d9e8d7 52%, #dde7da 59%, #f0e6c2 64%, #f5e7c6 68%, #eedfcf 76%, #eedad3 84%, #eedccd 100%); color: #1b1b1b; font-size: 24px; line-height: 32px; }
.weather { display: flex; gap: 15px; padding: 18px 0 0 38px; white-space: nowrap; }
.weather p { margin-top: -4px; }
.weather span { color: #5c5550; }
.apps { display: flex; align-items: center; padding-bottom: 1px; }
.apps button { position: relative; width: 88px; height: 77px; }
.find-box { display: flex; align-items: center; gap: 18px; width: 436px; height: 64px; margin: 0 5px 0 8px; padding: 0 8px 0 21px; border: 1px solid #c4cace; border-bottom: 2px solid #b0b4b6; border-radius: 32px; background: rgba(255, 255, 255, 0.7); }
.find-box input { flex: 1; min-width: 0; border: 0; background: none; outline: none; font-size: 28px; }
.find-box input::placeholder { color: #5a5a5a; }
.running::after { content: ""; position: absolute; bottom: 0; left: 50%; width: 12px; height: 6px; margin-left: -6px; border-radius: 3px; background: #80807a; }
.current { background: linear-gradient(#f9f1e6, #f9f1e6) center / 76px 77px no-repeat; }
.current::after { width: 32px; margin-left: -16px; background: #5f7787; }
.tray { position: relative; display: flex; align-items: center; justify-content: flex-end; padding-right: 40px; }
.tray button { width: 78px; height: 76px; font-size: 30px; }
.tray button:first-child { width: 48px; }
.tray .system { width: auto; gap: 16px; margin: 0 22px 0 22px; }
.clock { min-width: 105px; text-align: right; }
.badge { width: 32px; height: 32px; margin-left: 15px; border-radius: 50%; background: #4a6272; color: #ffffff; text-align: center; }
.watermark { position: absolute; right: 14px; bottom: 4px; line-height: 30px; font-size: 21px; color: #ffffff; text-shadow: 1px 1px 1px #666666; opacity: 0.85; }
```
